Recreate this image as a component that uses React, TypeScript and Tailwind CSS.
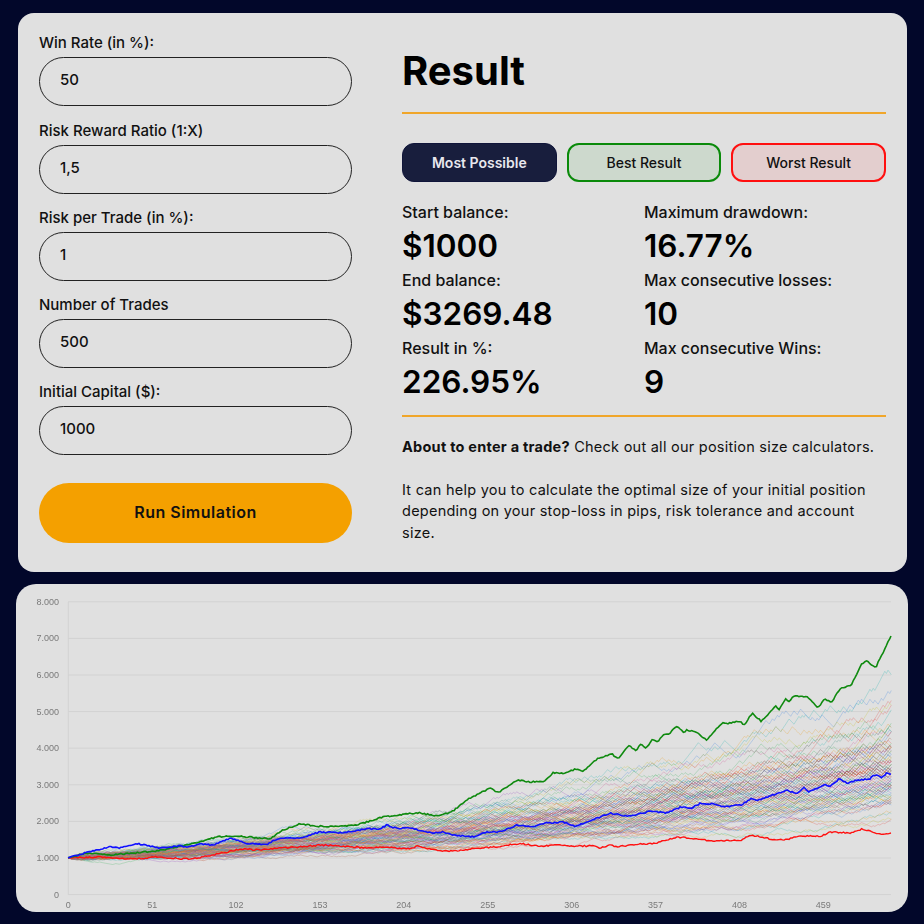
import React from "react";

const greenPts: [number, number][] = [[68,857.7],[87,853],[110,855],[133,853],[157,851],[187,845],[217,837],[233,836],[250,837],[270,839],[283,830],[300,824],[327,827],[357,825],[383,817],[417,812.7],[440,816],[453,811],[470,798],[490,788],[498,793],[517,780],[529,782],[545,781],[553,773],[567,773],[575,769],[583,771],[597,759],[612,754],[618,759],[624,752],[629,745],[636,751],[641,744],[646,748],[652,740],[657,742],[666,733],[669,735],[676,726],[684,733],[687,730],[692,731],[697,733],[707,740],[717,728],[724,722],[727,724],[739,721],[745,725],[752,713],[761,721],[767,716],[776,706],[779,710],[786,698],[789,702],[794,696],[807,697],[818,708],[824,699],[832,702],[839,690],[844,687],[851,686],[861,665],[866,660],[871,665],[876,667],[891,636]];
const bluePts: [number, number][] = [[68,857.7],[97,850],[110,847],[120,848],[138,844],[160,848],[180,846],[190,847],[200,844],[213,845],[230,838],[248,844],[267,844],[280,838],[300,838],[320,832],[343,833],[367,829],[380,829],[387,825],[398,829],[407,827],[432,833],[443,832],[457,836],[463,836],[473,837],[487,832],[500,832],[517,825],[533,827],[545,823],[563,822],[575,826],[590,821],[610,813],[625,816],[634,815],[652,811],[667,813],[681,807],[691,808],[701,803],[714,804],[724,807],[741,805],[751,799],[759,800],[767,797],[787,790],[797,794],[804,788],[809,792],[824,785],[831,786],[839,779],[847,783],[857,780],[870,779],[874,775],[882,777],[887,773],[891,774]];
const redPts: [number, number][] = [[68,857.7],[100,857],[133,859],[157,857],[187,859],[203,857],[227,852],[240,849],[260,850],[277,848],[300,847],[320,845],[340,846],[367,848],[387,847],[410,849],[417,846],[440,851],[457,851],[477,848],[497,847],[513,844],[523,844],[540,846],[557,845],[577,846],[593,846],[600,848],[610,845],[617,847],[630,845],[657,843],[677,837],[691,838],[714,841],[741,840],[751,835],[771,839],[784,840],[801,836],[821,836],[831,832],[851,833],[862,829],[879,834],[891,833]];

function rng(seed: number) {
  let s = seed >>> 0;
  return () => {
    s = (s + 0x6d2b79f5) >>> 0;
    let t = s;
    t = Math.imul(t ^ (t >>> 15), t | 1);
    t ^= t + Math.imul(t ^ (t >>> 7), t | 61);
    return ((t ^ (t >>> 14)) >>> 0) / 4294967296;
  };
}

function interp(pts: [number, number][], x: number) {
  let i = 0;
  while (i < pts.length - 2 && pts[i + 1][0] < x) i++;
  const [x0, y0] = pts[i];
  const [x1, y1] = pts[i + 1];
  return y0 + ((y1 - y0) * (x - x0)) / (x1 - x0);
}

function tracePath(pts: [number, number][], seed: number) {
  const r = rng(seed);
  let d = `M${pts[0][0]} ${pts[0][1]}`;
  for (let x = pts[0][0] + 1.65; x < 891; x += 1.65) {
    const y = interp(pts, x) + (r() - 0.5) * 1.4;
    d += `L${x.toFixed(1)} ${y.toFixed(1)}`;
  }
  return d + `L891 ${pts[pts.length - 1][1]}`;
}

const palette = ["#e04a45", "#3f86e0", "#3fb560", "#9a4fc0", "#e8a020", "#25b5b0", "#6a5fe0", "#c9c335", "#d45a9c", "#3f8f7f", "#5a6a9f", "#a05a3f"];

function simPaths() {
  const r = rng(4242);
  const out: { d: string; c: string }[] = [];
  let guard = 0;
  while (out.length < 100 && guard < 5000) {
    guard++;
    let v = 1000;
    let d = "M68 857.7";
    let ok = true;
    for (let t = 1; t < 500; t++) {
      v *= r() < 0.5 ? 1.015 : 0.99;
      const x = 68 + t * 1.65;
      const y = 894.6 - (v * 36.6) / 1000;
      if (y < interp(greenPts, x) - 6 || y > interp(redPts, x) + 12) ok = false;
      d += `L${x.toFixed(1)} ${y.toFixed(1)}`;
    }
    const c = palette[Math.floor(r() * palette.length)];
    if (ok && v < 6400 && v > 1900) out.push({ d, c });
  }
  return out;
}

const sims = simPaths();
const green = tracePath(greenPts, 11);
const blue = tracePath(bluePts, 22);
const red = tracePath(redPts, 33);

function Chart() {
  const ticksY = [8, 7, 6, 5, 4, 3, 2, 1, 0];
  const ticksX = [0, 51, 102, 153, 204, 255, 306, 357, 408, 459];
  return (
    <svg viewBox="16 584 892 328" width={892} height={328} className="block blur-[0.4px]">
      {ticksY.map((k) => {
        const y = 894.6 - k * 36.6;
        return (
          <g key={k}>
            <line x1={68} x2={891} y1={y} y2={y} stroke="#d2d2d2" strokeWidth={1} />
            <text x={59} y={y + 3} textAnchor="end" fontSize={9} fill="#7a7a7a" fontFamily="'Liberation Sans', sans-serif">
              {k === 0 ? "0" : `${k}.000`}
            </text>
          </g>
        );
      })}
      <line x1={68.3} x2={68.3} y1={602} y2={895} stroke="#d2d2d2" strokeWidth={1} />
      {ticksX.map((k) => (
        <text key={k} x={68.3 + k * 1.645} y={908} textAnchor="middle" fontSize={9} fill="#7a7a7a" fontFamily="'Liberation Sans', sans-serif">
          {k}
        </text>
      ))}
      {sims.map((s, i) => (
        <path key={i} d={s.d} fill="none" stroke={s.c} strokeOpacity={0.3} strokeWidth={0.9} />
      ))}
      <path d={red} fill="none" stroke="#ff1010" strokeWidth={1.4} />
      <path d={green} fill="none" stroke="#0f8a0f" strokeWidth={1.6} />
      <path d={blue} fill="none" stroke="#1010ff" strokeWidth={1.6} />
    </svg>
  );
}

function Field({ label, value, gap }: { label: string; value: string; gap: string }) {
  return (
    <div className={gap}>
      <div className="text-[15px] leading-[22px] font-medium text-[#111] mb-[3px]">{label}</div>
      <div className="h-[49px] rounded-[24.5px] border border-[#222] pl-[20px] pb-[2px] flex items-center text-[15px] font-medium text-[#111]">
        {value}
      </div>
    </div>
  );
}

function Stat({ label, value }: { label: string; value: string }) {
  return (
    <div className="h-[68px]">
      <div className="text-[16px] leading-[20px] mb-[2px] font-medium text-[#111]">{label}</div>
      <div className="text-[31.5px] leading-[44px] font-semibold text-black">{value}</div>
    </div>
  );
}

export default function App() {
  return (
    <div className="w-[924px] h-[924px] bg-[#02072a] font-['Inter',sans-serif] pt-[13px] overflow-hidden">
      <div className="ml-[18px] w-[889px] h-[559px] rounded-[16px] bg-[#e0e0e0] flex pl-[21px] pr-[21px]">
        <div className="w-[313px] pt-[19px] shrink-0">
          <Field gap="mb-[14px]" label="Win Rate (in %):" value="50" />
          <Field gap="mb-[13px]" label="Risk Reward Ratio (1:X)" value="1,5" />
          <Field gap="mb-[13px]" label="Risk per Trade (in %):" value="1" />
          <Field gap="mb-[13px]" label="Number of Trades" value="500" />
          <Field gap="" label="Initial Capital ($):" value="1000" />
          <div className="mt-[28px] h-[60px] rounded-[30px] bg-[#f4a000] flex items-center justify-center pb-[2px] text-[16px] font-semibold text-[#111] tracking-[0.5px]">
            Run Simulation
          </div>
        </div>
        <div className="ml-[50px] flex-1 min-w-0">
          <div className="pt-[33px] h-[101px] border-b-2 border-[#f0a62a] text-[40px] leading-[50px] font-bold text-black">Result</div>
          <div className="mt-[29px] grid grid-cols-3 gap-[10px]">
            <div className="h-[39px] rounded-[12px] bg-[#181e3d] border border-[#10153a] flex items-center justify-center text-[14px] font-semibold text-[#e8e8ee]">Most Possible</div>
            <div className="h-[39px] rounded-[12px] bg-[#cdd9cd] border-2 border-[#0a8a0a] flex items-center justify-center text-[14px] font-medium text-[#111]">Best Result</div>
            <div className="h-[39px] rounded-[12px] bg-[#e3cece] border-2 border-[#ff0f0f] flex items-center justify-center text-[14px] font-medium text-[#111]">Worst Result</div>
          </div>
          <div className="mt-[20px] grid grid-cols-2 pb-[9px] border-b-2 border-[#f0a62a]">
            <Stat label="Start balance:" value="$1000" />
            <Stat label="Maximum drawdown:" value="16.77%" />
            <Stat label="End balance:" value="$3269.48" />
            <Stat label="Max consecutive losses:" value="10" />
            <Stat label="Result in %:" value="226.95%" />
            <Stat label="Max consecutive Wins:" value="9" />
          </div>
          <div className="mt-[19px] text-[14.5px] leading-[21.5px] text-[#111] tracking-[0.25px]">
            <p><span className="font-bold">About to enter a trade?</span> Check out all our position size calculators.</p>
            <p className="mt-[21.2px] pr-[16px]">It can help you to calculate the optimal size of your initial position depending on your stop-loss in pips, risk tolerance and account size.</p>
          </div>
        </div>
      </div>
      <div className="mt-[12px] ml-[16px] w-[892px] h-[328px] rounded-[20px] bg-[#e0e0e0] overflow-hidden">
        <Chart />
      </div>
    </div>
  );
}
